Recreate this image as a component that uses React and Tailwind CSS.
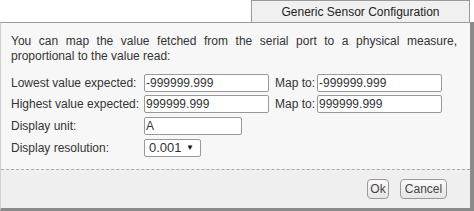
import React from 'react';

const rows = [
  { label: 'Lowest value expected:', value: '-999999.999', map: '-999999.999' },
  { label: 'Highest value expected:', value: '999999.999', map: '999999.999' },
];

const App = () => {
  return (
    <div className="w-[474px] h-[211px] bg-white text-[12px] text-[#333] overflow-hidden" style={{ fontFamily: '"Liberation Sans", Arial, sans-serif' }}>
      {/* tab */}
      <div className="flex justify-end h-[22px]">
        <div className="w-[219px] mr-[4px] h-[22px] border border-b-0 border-[#9a9a9a] bg-[#f0f0f0] flex items-center justify-center text-[#222]">
          Generic Sensor Configuration
        </div>
      </div>

      {/* panel */}
      <div className="h-[189px] flex flex-col border-t border-t-[#9a9a9a] border-l border-l-[#d0d0d0] border-r-[4px] border-r-[#8a8a8a] border-b-[3px] border-b-[#8a8a8a] bg-[#f7f7f7]">
        <div className="h-[146px] pt-[11px] pl-[10px] pr-[13px]">
          <p className="text-justify leading-[15px]">
            You can map the value fetched from the serial port to a physical measure, proportional to the value read:
          </p>

          <div className="mt-[9px] flex flex-col gap-[2px]">
            {rows.map((r) => (
              <div key={r.label} className="flex items-center h-[19px]">
                <span className="w-[133px]">{r.label}</span>
                <input
                  readOnly
                  value={r.value}
                  className="w-[125px] h-[18px] px-[1px] border border-[#999] rounded-[2px] bg-white text-[12px] text-[#333] outline-none"
                />
                <span className="ml-[6px] w-[42px]">Map to:</span>
                <input
                  readOnly
                  value={r.map}
                  className="w-[125px] h-[18px] px-[1px] border border-[#999] rounded-[2px] bg-white text-[12px] text-[#333] outline-none"
                />
              </div>
            ))}
            <div className="flex items-center h-[19px] mt-[1px]">
              <span className="w-[133px]">Display unit:</span>
              <input
                readOnly
                value="A"
                className="w-[98px] h-[18px] px-[1px] border border-[#999] rounded-[2px] bg-white text-[12px] text-[#333] outline-none"
              />
            </div>
            <div className="flex items-center h-[19px] mt-[1px]">
              <span className="w-[133px]">Display resolution:</span>
              <div className="w-[57px] h-[18px] border border-[#999] rounded-[2px] bg-white flex items-center justify-between pl-[4px] pr-[6px]">
                <span className="text-[13px]">0.001</span>
                <span className="text-[8px] text-[#111]">▼</span>
              </div>
            </div>
          </div>
        </div>

        {/* footer */}
        <div className="flex-1 border-t border-dashed border-t-[#aaa] bg-[#efefef] flex items-center justify-end gap-[11px] pr-[23px]">
          <button className="h-[20px] w-[22px] border border-[#999] rounded-[4px] bg-gradient-to-b from-[#fafafa] to-[#e6e6e6] text-[12px] text-[#444]">
            Ok
          </button>
          <button className="h-[20px] w-[47px] border border-[#999] rounded-[4px] bg-gradient-to-b from-[#fafafa] to-[#e6e6e6] text-[12px] text-[#444]">
            Cancel
          </button>
        </div>
      </div>
    </div>
  );
};

export default App;
